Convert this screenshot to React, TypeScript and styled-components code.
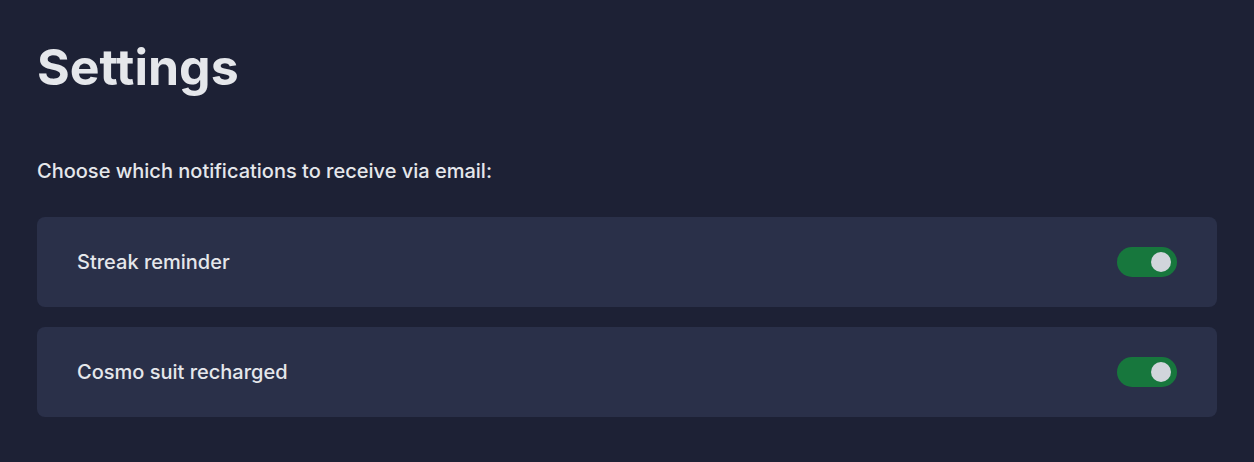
import React, { useState } from "react";
import styled, { createGlobalStyle } from "styled-components";

const Global = createGlobalStyle`
  html, body { margin: 0; padding: 0; background: #1d2135; }
  body { font-family: Inter, "Noto Sans", sans-serif; color: #e5e7eb; }
`;

const Page = styled.main`
  padding: 37px 37px 40px 37px;
  display: flex;
  flex-direction: column;
`;

const Title = styled.h1`
  margin: 0;
  font-size: 50px;
  line-height: 60px;
  font-weight: 700;
  color: #e5e7eb;
`;

const Subtitle = styled.p`
  margin: 60px 0 0 0;
  font-size: 20px;
  line-height: 28px;
  font-weight: 500;
  color: #e5e7eb;
`;

const List = styled.div`
  margin-top: 32px;
  display: flex;
  flex-direction: column;
  gap: 20px;
`;

const Card = styled.div`
  height: 90px;
  box-sizing: border-box;
  padding: 0 40px;
  background: #2a3049;
  border-radius: 8px;
  display: flex;
  align-items: center;
  justify-content: space-between;
`;

const Label = styled.span`
  font-size: 20px;
  font-weight: 500;
  color: #e5e7eb;
`;

const Switch = styled.button<{ $on: boolean }>`
  width: 60px;
  height: 30px;
  border: none;
  padding: 0;
  border-radius: 15px;
  background: ${(p) => (p.$on ? "#17773d" : "#4b5563")};
  position: relative;
  cursor: pointer;
`;

const Knob = styled.span<{ $on: boolean }>`
  position: absolute;
  top: 5px;
  left: ${(p) => (p.$on ? "34px" : "6px")};
  width: 20px;
  height: 20px;
  border-radius: 50%;
  background: #d1d5db;
`;

const items = ["Streak reminder", "Cosmo suit recharged"];

export default function App() {
  const [state, setState] = useState<boolean[]>([true, true]);
  return (
    <>
      <Global />
      <Page>
        <Title>Settings</Title>
        <Subtitle>Choose which notifications to receive via email:</Subtitle>
        <List>
          {items.map((label, i) => (
            <Card key={label}>
              <Label>{label}</Label>
              <Switch
                $on={state[i]}
                onClick={() => setState((s) => s.map((v, j) => (j === i ? !v : v)))}
              >
                <Knob $on={state[i]} />
              </Switch>
            </Card>
          ))}
        </List>
      </Page>
    </>
  );
}
